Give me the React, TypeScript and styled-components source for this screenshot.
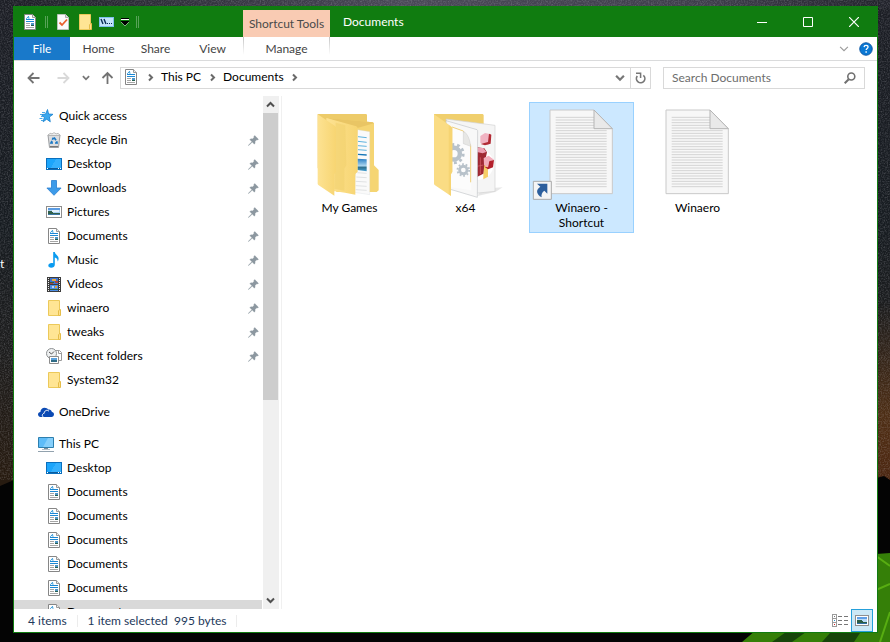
import React from "react";
import styled, { createGlobalStyle, css } from "styled-components";

const GlobalStyle = createGlobalStyle`
  *, *::before, *::after { box-sizing: border-box; }
  body { margin: 0; background: #000; }
  body, button, input {
    font-family: Lato, "Open Sans", sans-serif;
    font-size: 12px;
    line-height: 16px;
    color: #000;
  }
  button { border: 0; padding: 0; background: transparent; cursor: default; }
  a { color: inherit; text-decoration: none; cursor: default; }
  ul { margin: 0; padding: 0; list-style: none; }
  svg { display: block; flex: none; }
`;

/* ---------- desktop and window ---------- */

const Desktop = styled.div`
  position: relative;
  display: flex;
  height: 100vh;
  padding: 6px 12px 9px 13px;
  overflow: hidden;
`;

const Wallpaper = styled.svg`
  position: absolute;
  inset: 0;
  width: 100%;
  height: 100%;
`;

const DesktopLabel = styled.span`
  position: absolute;
  left: 0;
  top: 256px;
  color: #fff;
`;

const Window = styled.main`
  position: relative;
  flex: 1;
  min-width: 0;
  display: flex;
  flex-direction: column;
  border: 1px solid #107c10;
  background: #fff;
`;

const TitleBar = styled.header`
  display: flex;
  align-items: stretch;
  height: 30px;
  flex: none;
  background: #107c10;
  color: #fff;
`;

const QuickBar = styled.div`
  display: flex;
  align-items: center;
  width: 229px;
  padding-left: 8px;
  gap: 6px;
`;

const QuickButton = styled.button<{ $narrow?: boolean }>`
  display: flex;
  align-items: center;
  justify-content: center;
  width: ${({ $narrow }) => ($narrow ? 8 : 16)}px;
  height: 20px;
`;

const QuickDivider = styled.span`
  width: 3px;
  height: 12px;
  margin: 0 1px;
  border: solid #58a358;
  border-width: 0 1px;
`;

const ToolsLabel = styled.div`
  display: flex;
  align-items: center;
  justify-content: center;
  width: 87px;
  margin-top: 3px;
  background: #f9cbb3;
  color: #4a4a4a;
`;

const Title = styled.h1`
  flex: 1;
  margin: 0;
  padding: 7px 13px 0;
  font-size: 12px;
  font-weight: 400;
  line-height: 16px;
`;

const CaptionButton = styled.button`
  display: flex;
  align-items: center;
  justify-content: center;
  width: 46px;
`;

/* ---------- ribbon ---------- */

const Ribbon = styled.nav`
  display: flex;
  height: 24px;
  flex: none;
  border-bottom: 1px solid #dadbdc;
`;

const Tab = styled.button<{ $kind?: "file" | "context" }>`
  width: 57px;
  color: #444;
  ${({ $kind }) => $kind === "file" && css`
    width: 56px;
    background: #1979ca;
    color: #fff;
  `}
  ${({ $kind }) => $kind === "context" && css`
    width: 87px;
    margin-left: 2px;
    background:
      linear-gradient(#c4c4c4, #fff) left top / 1px 18px no-repeat,
      linear-gradient(#c4c4c4, #fff) right top / 1px 18px no-repeat;
  `}
`;

const RibbonEnd = styled.div`
  display: flex;
  align-items: center;
  margin-left: auto;
  padding-right: 4px;
  gap: 10px;
`;

/* ---------- address row ---------- */

const AddressRow = styled.div`
  display: flex;
  height: 35px;
  flex: none;
  padding: 6px 12px 7px;
`;

const History = styled.div`
  display: flex;
  align-items: center;
  width: 94px;
`;

const HistoryButton = styled.button<{ $before?: number }>`
  display: flex;
  align-items: center;
  justify-content: center;
  width: 14px;
  height: 22px;
  margin-left: ${({ $before = 0 }) => $before}px;
`;

const AddressBox = styled.div`
  display: flex;
  align-items: stretch;
  flex: 1;
  border: 1px solid #d9d9d9;
`;

const Crumbs = styled.div`
  display: flex;
  align-items: center;
  flex: 1;
  padding: 0 0 2px 2px;
`;

const CrumbArrow = styled.span`
  display: flex;
  justify-content: center;
  width: 22px;
`;

const BoxButton = styled.button<{ $divided?: boolean }>`
  display: flex;
  align-items: center;
  justify-content: center;
  width: 20px;
  border-left: ${({ $divided }) => ($divided ? "1px solid #d9d9d9" : "0")};
`;

const SearchBox = styled.label`
  display: flex;
  align-items: center;
  width: 202px;
  margin-left: 12px;
  padding: 0 8px;
  border: 1px solid #d9d9d9;
`;

const SearchInput = styled.input`
  flex: 1;
  min-width: 0;
  padding: 0;
  border: 0;
  outline: 0;
  background: transparent;
  &::placeholder { color: #6d6d6d; opacity: 1; }
`;

/* ---------- body ---------- */

const Body = styled.div`
  display: flex;
  flex: 1;
  min-height: 0;
`;

const NavPane = styled.nav`
  display: flex;
  width: 268px;
  flex: none;
  border-right: 1px solid #f0f0f0;
`;

const Tree = styled.div`
  display: flex;
  flex-direction: column;
  gap: 8px;
  flex: 1;
  padding: 8px 1px 0 0;
  overflow: hidden;
`;

const TreeLink = styled.a<{ $child?: boolean; $selected?: boolean }>`
  display: flex;
  align-items: center;
  gap: 5px;
  height: 24px;
  padding: 0 3px 0 ${({ $child }) => ($child ? 32 : 24)}px;
  background: ${({ $selected }) => ($selected ? "#d9d9d9" : "transparent")};
`;

const TreeText = styled.span`
  flex: 1;
`;

const ScrollBar = styled.div`
  display: flex;
  flex-direction: column;
  width: 16px;
  margin-right: 2px;
  background: #f0f0f0;
`;

const ScrollButton = styled.button`
  display: flex;
  align-items: center;
  justify-content: center;
  width: 15px;
  height: 17px;
`;

const ScrollTrack = styled.div`
  flex: 1;
`;

const ScrollThumb = styled.div`
  width: 15px;
  height: 60%;
  background: #cdcdcd;
`;

const Files = styled.div`
  display: flex;
  flex-wrap: wrap;
  align-content: flex-start;
  align-items: flex-start;
  flex: 1;
  gap: 11px;
  padding: 6px 15px;
`;

const FileButton = styled.button<{ $selected?: boolean }>`
  display: flex;
  flex-direction: column;
  align-items: center;
  width: 105px;
  padding: 1px 12px 2px;
  line-height: 15px;
  border: 1px solid ${({ $selected }) => ($selected ? "#99d1ff" : "transparent")};
  background: ${({ $selected }) => ($selected ? "#cce8ff" : "transparent")};
`;

const StatusBar = styled.footer`
  display: flex;
  align-items: center;
  height: 23px;
  flex: none;
  padding: 0 4px 0 14px;
  color: #1e395b;
`;

const StatusItem = styled.span`
  padding-right: 10px;
  margin-right: 10px;
  border-right: 1px solid #ececec;
  line-height: 12px;
  white-space: pre;
`;

const ViewButton = styled.button<{ $active?: boolean }>`
  display: flex;
  align-items: center;
  justify-content: center;
  width: 22px;
  height: 23px;
  border: ${({ $active }) => ($active ? "1px solid #26a0da" : "0")};
  background: ${({ $active }) => ($active ? "#cbe8f6" : "transparent")};
`;

const Views = styled.div`
  display: flex;
  margin-left: auto;
`;

/* ---------- small icons ---------- */

const Svg16 = ({ children, crisp }: { children: React.ReactNode; crisp?: boolean }) => (
  <svg width="16" height="16" viewBox="0 0 16 16" shapeRendering={crisp ? "crispEdges" : "auto"} aria-hidden="true">
    {children}
  </svg>
);

const DocIcon = () => (
  <Svg16>
    <path d="M2.5 .5h8l3 3v12h-11z" fill="#fff" stroke="#868686" />
    <path d="M10.5 .5v3h3" fill="#eee" stroke="#9a9a9a" />
    <path d="M4.300 4.800 6.500 2.300 7 4.800" fill="none" stroke="#1f8fd6" strokeWidth=".9" />
    <path d="M4 5.500h8M4 7.500h8" stroke="#1c88d4" />
    <path d="M4 9.500h4M4 11.500h4M4 13.500h8" stroke="#a5a5a5" />
    <path d="M9 9h3v3h-3z" fill="#4f94c4" />
    <path d="M9 11h3v1h-3z" fill="#245f4e" />
  </Svg16>
);

const FolderIcon = () => (
  <Svg16>
    <path d="M2.500 .500h11v15h-11z" fill="#ffe594" stroke="#ecc95a" />
    <path d="M12.500 15.500v-4.500l1-1.500h1v6z" fill="#ffe08a" stroke="#e5bd49" />
  </Svg16>
);

const StarIcon = () => (
  <Svg16>
    <path d="M9.500 1.500 10.600 6 15 6.300 11.400 9 12.300 13.800 8.700 11.200 5.200 13.800 6.300 9.300 3.400 6.700 7.600 6z" fill="#3aa8ee" stroke="#1580cf" strokeWidth=".8" />
    <path d="M4 4.500h3M2 6.500h2M3 8.500h2M1.500 10.500h3M3 12.500h2" stroke="#49a9e6" />
  </Svg16>
);

const BinIcon = () => (
  <Svg16>
    <path d="M2 3 3.500 15.500h9L14 3z" fill="#dcdddf" stroke="#929497" strokeWidth=".9" />
    <path d="M2 3.400 4 1.200l2 .7 2-1.200 2.200 1.100 2-.5L14 3.400z" fill="#f4f4f4" stroke="#aaa" strokeWidth=".8" />
    <path d="M4 14.500h8" stroke="#777" />
    <path d="M8 5.600 10 8.300M10.600 9.200 11 11H9M7 11H5l1-2.200M6.300 7.800 7.500 5.800" fill="none" stroke="#1977c4" strokeWidth="1.700" />
  </Svg16>
);

const DesktopIcon = () => (
  <Svg16 crisp>
    <path d="M0 2h16v12H0z" fill="#0a6fbd" />
    <path d="M1 3h14v9H1z" fill="#1ca5fb" />
    <path d="M10 3h5v9H5z" fill="#35b0fd" />
    <path d="M1 12h14v1H1z" fill="#0b5c9e" />
    <path d="M1 12h1v1H1zM12 12h1v1h-1zM14 12h1v1h-1z" fill="#fff" />
  </Svg16>
);

const DownloadIcon = () => (
  <Svg16>
    <path d="M5.500 .500h5v7.500h4.600L8 15.300.900 8h4.600z" fill="#3d9be9" stroke="#2a7fd0" strokeWidth=".8" />
  </Svg16>
);

const PictureIcon = () => (
  <Svg16 crisp>
    <path d="M0 2h16v12H0z" fill="#8e8e8e" />
    <path d="M1 3h14v10H1z" fill="#fff" />
    <path d="M2 4h12v7H2z" fill="#a9d2f5" />
    <path d="M2 4h12v2H2z" fill="#5a9be2" />
    <path d="M6 6h7v2H6z" fill="#e4f0fa" />
    <path d="M2 7h3l3 2h6v1H2z" fill="#31604b" />
    <path d="M2 10h12v1H2z" fill="#3b77a5" />
  </Svg16>
);

const MusicIcon = () => (
  <Svg16>
    <path d="M7.200 0h1.600c.4 2.800 3.800 3.400 3.800 6.600 0 1.300-.4 2.200-1 3 .2-2.400-.8-3.700-2.800-4.200v7.300c0 1.800-1.600 3-3.600 3-1.800 0-2.900-.9-2.900-2.200 0-1.700 1.700-2.700 3.400-2.600.6 0 1 .1 1.500.3z" fill="#0a9bf0" />
  </Svg16>
);

const VideoIcon = () => (
  <Svg16 crisp>
    <path d="M1 1h14v15H1z" fill="#3c3c3c" />
    <path d="M4 2h8v6H4z" fill="#3c74d2" />
    <path d="M4 9h8v6H4z" fill="#4b8ce4" />
    <path d="M6 3h4v2H6zM9 10h2v2H9z" fill="#e8a83b" />
    <path d="M4 6h3v2H4zM9 5h3v2H9z" fill="#a9453c" />
    <path d="M4 6h4v1H4zM4 13h8v1H4z" fill="#315e3a" />
    <path d="M6 10h2v2H6z" fill="#bcd5f4" />
    <path d="M2.500 2v14M13.500 2v14" stroke="#eee" strokeDasharray="1 1" />
  </Svg16>
);

const RecentIcon = () => (
  <Svg16>
    <path d="M8.500 2.500h5l2 2v8h-7z" fill="#fff" stroke="#9b9b9b" />
    <path d="M12.500 2.500v3h3" fill="none" stroke="#9b9b9b" />
    <circle cx="5.500" cy="5.500" r="5" fill="#eef0f1" stroke="#8d9092" />
    <path d="M3 4l2.500 2L8 3.500" fill="none" stroke="#555" />
    <path d="M3.500 8.500h9v7h-9z" fill="#fff" stroke="#8d8d8d" />
    <path d="M5 10h6v4H5z" fill="#5aa0dc" />
    <path d="M5 12h6v2H5z" fill="#2f6c86" />
  </Svg16>
);

const CloudIcon = () => (
  <Svg16>
    <path d="M3.500 13C1.500 13 0 12 0 10.400 0 9 1 8.100 2.400 8 2.500 5.500 4.200 3.700 6.600 3.700c1.700 0 2.800.7 3.600 1.900 1.600-.5 3.400.4 3.700 2.300 1.400.2 2.100 1.200 2.100 2.400 0 1.600-1 2.700-2.600 2.700z" fill="#0b4ab4" />
    <path d="M5.600 13.300C3.600 12.300 4 9.600 6.200 9.300 6.200 6.600 9.200 5.300 11 7.300" fill="none" stroke="#fff" strokeWidth="1" />
  </Svg16>
);

const PcIcon = () => (
  <Svg16>
    <path d="M.500 1.500h15v10H.500z" fill="#5ebcf8" stroke="#2d7fae" />
    <path d="M10 2h5v9H5z" fill="#86cffb" />
    <path d="M6 12h4v1H6z" fill="#7a8c98" />
    <path d="M4 13h8v1H4z" fill="#b4c0c9" />
    <path d="M0 15h16v1H0z" fill="#92a2ae" />
  </Svg16>
);

const PinIcon = () => (
  <svg width="11" height="11" viewBox="0 0 11 11" aria-hidden="true">
    <path d="M6.700 .600 10.400 4.200 9.600 5 8.700 4.800 7 6.600c.2 1 .1 1.900-.6 2.600L4.300 7 1 10.300.500 10.500.700 9.900 3.900 6.700 1.800 4.600C2.500 3.900 3.500 3.700 4.400 4L6.200 2.300 5.900 1.400z" fill="#8c97a0" stroke="#8c97a0" strokeWidth=".4" />
  </svg>
);

const Chevron = ({ dir, color = "#6a6a6a", size = 9, weight = 2 }: { dir: "up" | "down" | "right"; color?: string; size?: number; weight?: number }) => {
  const shapes = { up: "M1 6.500 4.500 3 8 6.500", down: "M1 2.500 4.500 6 8 2.500", right: "M3 1.500 6 4.500 3 7.500" };
  return (
    <svg width={size} height={size} viewBox="0 0 9 9" aria-hidden="true">
      <path d={shapes[dir]} fill="none" stroke={color} strokeWidth={weight} />
    </svg>
  );
};

const Arrow = ({ dir, color }: { dir: "left" | "right" | "up"; color: string }) => {
  const shapes = { left: "M12.500 7H1.500M6.500 2 1.500 7l5 5", right: "M.500 7h11M6.500 2l5 5-5 5", up: "M6.500 13V2M1.500 7l5-5 5 5" };
  return (
    <svg width="13" height="14" viewBox="0 0 13 14" aria-hidden="true">
      <path d={shapes[dir]} fill="none" stroke={color} strokeWidth="1.800" />
    </svg>
  );
};

const CheckIcon = () => (
  <Svg16>
    <path d="M2.500 .500h8l3 3v12h-11z" fill="#fafafa" stroke="#b9c4b9" />
    <path d="M10.500 .500v3h3" fill="#ddd" stroke="#aaa" />
    <path d="M4.500 8.500 7 11l5-5.500" fill="none" stroke="#e8602c" strokeWidth="1.800" />
  </Svg16>
);

const RenameIcon = () => (
  <Svg16 crisp>
    <path d="M0 3h15v10H0z" fill="#7fc0ee" />
    <path d="M1 4h13v8H1z" fill="#c4e4fb" />
    <path d="M2 5l2 5M5 5l2 5" stroke="#0b2d56" strokeWidth="1.400" shapeRendering="auto" />
    <path d="M8 9h1v1H8zM10 9h1v1h-1zM12 9h1v1h-1z" fill="#0b2d56" />
  </Svg16>
);

const MenuDownIcon = () => (
  <svg width="8" height="8" viewBox="0 0 8 8" aria-hidden="true">
    <path d="M0 1.500h8" stroke="#fff" />
    <path d="M0 .500h8M0 3.500h8" stroke="#000" />
    <path d="M0 3.500h8L4 7.800z" fill="#000" />
    <path d="M0 4 4 8l4-4" fill="none" stroke="#cfe3cf" strokeWidth=".6" />
  </svg>
);

const HelpIcon = () => (
  <svg width="14" height="14" viewBox="0 0 15 15" aria-hidden="true">
    <circle cx="7.500" cy="7.500" r="6.700" fill="#0a78d4" stroke="#0b55a3" />
    <path d="M5.400 5.500c.1-1.300 1-1.900 2.100-1.900 1.300 0 2.200.7 2.200 1.800 0 1.500-2 1.600-2 3.300" fill="none" stroke="#fff" strokeWidth="1.400" />
    <path d="M6.900 10h1.500v1.500H6.900z" fill="#fff" />
  </svg>
);

const RefreshIcon = () => (
  <svg width="11" height="12" viewBox="0 0 11 12" aria-hidden="true">
    <path d="M8.300 3.300A4.200 4.200 0 1 1 2.300 4" fill="none" stroke="#777" strokeWidth="1.700" />
    <path d="M1 1.300h4.600V6" fill="none" stroke="#777" strokeWidth="1.500" />
  </svg>
);

const SearchIcon = () => (
  <svg width="12" height="12" viewBox="0 0 12 12" aria-hidden="true">
    <circle cx="7.300" cy="4.500" r="3.500" fill="none" stroke="#707070" strokeWidth="1.600" />
    <path d="M4.700 7.200.700 11.200" stroke="#707070" strokeWidth="2" />
  </svg>
);

const DetailsIcon = () => (
  <svg width="16" height="13" viewBox="0 0 16 13" shapeRendering="crispEdges" aria-hidden="true">
    <path d="M.500 .500h4v12h-4zM0 4.500h5M0 8.500h5" fill="#fff" stroke="#9a9a9a" />
    <path d="M6 2.500h4M12 2.500h4M6 6.500h4M12 6.500h4M6 10.500h4M12 10.500h4" stroke="#777" />
    <path d="M2 2h1v1H2z" fill="#777" />
    <path d="M2 6h1v1H2z" fill="#259ad8" />
    <path d="M2 10h1v1H2z" fill="#d22" />
  </svg>
);

const Thumbnail = () => (
  <svg width="14" height="11" viewBox="0 0 14 11" shapeRendering="crispEdges" aria-hidden="true">
    <path d="M.500 .500h13v10H.500z" fill="#fff" stroke="#8e8e8e" />
    <path d="M2 2h10v7H2z" fill="#b9daf7" />
    <path d="M2 2h10v2H2z" fill="#5f9fe6" />
    <path d="M2 5h4l2 2h4v1H2z" fill="#2c5e46" />
    <path d="M2 8h10v1H2z" fill="#2f6ea5" />
  </svg>
);

/* ---------- large icons ---------- */

const LargeSvg = styled.svg`
  width: 96px;
  height: 96px;
  overflow: visible;
`;

const GamesFolder = () => (
  <LargeSvg viewBox="7 24 288 288" aria-hidden="true">
    <defs>
      <linearGradient id="flap" x1="0" x2="1" y1="0" y2="0">
        <stop offset="0" stopColor="#fde292" />
        <stop offset="1" stopColor="#f7d572" />
      </linearGradient>
      <linearGradient id="sky" x1="0" x2="0" y1="0" y2="1">
        <stop offset="0" stopColor="#277dc4" />
        <stop offset=".55" stopColor="#a9d4ee" />
        <stop offset=".7" stopColor="#2f7190" />
        <stop offset="1" stopColor="#46a2d6" />
      </linearGradient>
    </defs>
    <path d="M54 54h146l2 3v160H54z" fill="#edcb69" />
    <path d="M82 66l137 13 4 3v126l14 14v61l-6 5H110z" fill="#f5d573" />
    <path d="M82 66l137 13 4 3-50 14z" fill="#e9c564" />
    <path d="M173 101l37 6v189l-46-7z" fill="#fafafa" stroke="#d5dadd" />
    <path d="M175 122l26 3M175 136l26 3M175 149l26 2M175 161l26 2" stroke="#5fb3df" strokeWidth="3" />
    <path d="M175 175l26 2" stroke="#1777b8" strokeWidth="4" />
    <path d="M173 188l28 2v36l-28-4z" fill="url(#sky)" />
    <path d="M173 230l28 2M170 243l31 2M168 256l33 2M168 269l33 2M168 281l33 2" stroke="#d1d5d7" strokeWidth="2" />
    <path d="M80 66l90 25 4 4v132l-7 7v62l-31-6-56-8z" fill="url(#flap)" />
    <path d="M108 80l29 8 3 120-6 10v66l-30-6z" fill="#f0cf6b" opacity=".55" />
    <path d="M54 55l52 35 3 4v133l-5 8v64l-48-32-2-3z" fill="url(#flap)" />
  </LargeSvg>
);

const Gear = ({ x, y, r }: { x: number; y: number; r: number }) => (
  <g stroke="#b8c2ca" fill="none">
    <circle cx={x} cy={y} r={r * 1.25} strokeWidth={r * 0.4} pathLength="20" strokeDasharray="1 1" />
    <circle cx={x} cy={y} r={r * 0.8} strokeWidth={r * 0.6} />
  </g>
);

const GearFolder = () => (
  <LargeSvg viewBox="354 24 288 288" aria-hidden="true">
    <defs>
      <clipPath id="gearPage"><path d="M456 93l38 11 20 44v135l-64 2z" /></clipPath>
    </defs>
    <path d="M545 278l63-4-22 14-54 12z" fill="#ddd" opacity=".7" />
    <path d="M402 54h146l3 3v160H402z" fill="#f0cf6d" />
    <path d="M438 69l147 19v198l-80 8z" fill="#f5f5f5" stroke="#d2d2d2" strokeWidth="2" />
    <circle cx="535" cy="205" r="46" fill="#fff" />
    <path d="M550 203l14-9v48l-14 8z" fill="#f6cf68" />
    <path d="M541 120l14-9 18 4-4 10-4 22-24-6z" fill="#f0b3c2" />
    <path d="M567 113l7 3-2 27-17 5-13-4 22-6z" fill="#b22b35" />
    <path d="M531 154l22 3 8 12-7 30-4 34-19 10z" fill="#9f2832" />
    <path d="M530 155l20 1 9 12-11 4-17-4z" fill="#eda0b2" />
    <path d="M531 211l19-4M541 184v50" stroke="#d9636e" strokeWidth="2" />
    <path d="M551 186l15-7 16 12-14 4-4 20-12-9z" fill="#f3adbb" />
    <path d="M568 195l14-3-3 22-15 6-11-8 11 2z" fill="#b3202c" />
    <path d="M438 74l93 27 2 3-1 200-84-25z" fill="#f8f8f8" stroke="#c2c6c8" strokeWidth="2" />
    <path d="M456 93l38 11 20 44v135l-64-10z" fill="#fcfcfc" />
    <path d="M456 93l34 12 22 44v110" fill="none" stroke="#efcf7c" strokeWidth="3" />
    <path d="M490 106v37l22 8c-2-17-8-39-22-45z" fill="#e7e7e5" stroke="#bbb" />
    <g clipPath="url(#gearPage)"><Gear x={462} y={173} r={22} /></g>
    <Gear x={490} y={222} r={14} />
    <path d="M402 55l51 36 4 5v132l-4 7v65l-49-33-2-3z" fill="#fadc84" />
    <path d="M446 87l7 5 4 5v130l-4 7v65l-7-4z" fill="#f3cf67" opacity=".6" />
  </LargeSvg>
);

const TextPage = ({ x }: { x: number }) => (
  <g>
    <path d={`M${x} 42h132l55 56v195h-187z`} fill="#f7f7f7" stroke="#c9c9c9" strokeWidth="3" />
    {Array.from({ length: 27 }, (_, i) => 64 + i * 8).map((y) => (
      <path key={y} d={`M${x + 17} ${y}h${y < 98 ? 115 : 153}`} stroke="#d3d3d3" strokeWidth="3" />
    ))}
    <path d={`M${x + 132} 42v56h55z`} fill="#e9e9e9" stroke="#b5b5b5" strokeWidth="3" />
  </g>
);

const TextFile = ({ shortcut }: { shortcut?: boolean }) => (
  <LargeSvg viewBox="58 24 288 288" aria-hidden="true">
    <TextPage x={106} />
    {shortcut && (
      <g>
        <path d="M56 256h54v54H56z" fill="#f5f5f5" stroke="#aaa" strokeWidth="3" />
        <path d="M67 263h31v30l-9-9c-7 5-10 12-8 20-17-10-18-23-4-32z" fill="#2d5f9d" />
      </g>
    )}
  </LargeSvg>
);

/* ---------- wallpaper ---------- */

const Background = () => (
  <Wallpaper viewBox="0 0 890 642" preserveAspectRatio="none" aria-hidden="true">
    <defs>
      <linearGradient id="night" x1="0" x2="0" y1="0" y2="1">
        <stop offset="0" stopColor="#1c1e25" />
        <stop offset=".35" stopColor="#171c21" />
        <stop offset=".55" stopColor="#1d1d1d" />
        <stop offset=".74" stopColor="#271b10" />
      </linearGradient>
      <linearGradient id="dusk" x1="0" x2="0" y1="0" y2="1">
        <stop offset="0" stopColor="#6a3a14" stopOpacity="0" />
        <stop offset=".6" stopColor="#6a3a14" stopOpacity=".6" />
        <stop offset="1" stopColor="#4c2410" stopOpacity=".9" />
      </linearGradient>
      <linearGradient id="haze" x1="0" x2="1" y1="0" y2="0">
        <stop offset="0" stopColor="#555364" stopOpacity="0" />
        <stop offset=".45" stopColor="#555364" stopOpacity=".8" />
        <stop offset=".8" stopColor="#555364" stopOpacity=".6" />
        <stop offset="1" stopColor="#555364" stopOpacity=".1" />
      </linearGradient>
      <filter id="stars" x="0" y="0" width="100%" height="100%">
        <feTurbulence type="fractalNoise" baseFrequency=".7" numOctaves="2" seed="4" />
        <feColorMatrix values="0 0 0 0 .6  0 0 0 0 .6  0 0 0 0 .65  .5 0 0 0 -.2" />
      </filter>
    </defs>
    <path d="M0 0h890v642H0z" fill="url(#night)" />
    <path d="M0 0h890v8H0z" fill="url(#haze)" />
    <path d="M870 300h20v190h-20z" fill="url(#dusk)" />
    <path d="M0 0h890v480H0z" filter="url(#stars)" />
    <path d="M0 486l14-6v162H0zM0 632h760v10H0zM876 478l8-2 6 4v80h-14z" fill="#040404" />
    <path d="M742 642l14-12h120v-76l14-1v89z" fill="#357f08" />
    <path d="M772 642l14-10h20l-14 10zM822 642l8-9h30l-6 9z" fill="#17450a" />
    <path d="M876 556l14 10M876 590l14-6M880 642l10-30" stroke="#58ad12" strokeWidth="2" />
  </Wallpaper>
);

/* ---------- data ---------- */

type Entry = { name: string; icon: React.ReactNode; pinned?: boolean; selected?: boolean };

const groups: { head: Entry; items: Entry[] }[] = [
  {
    head: { name: "Quick access", icon: <StarIcon /> },
    items: [
      { name: "Recycle Bin", icon: <BinIcon />, pinned: true },
      { name: "Desktop", icon: <DesktopIcon />, pinned: true },
      { name: "Downloads", icon: <DownloadIcon />, pinned: true },
      { name: "Pictures", icon: <PictureIcon />, pinned: true },
      { name: "Documents", icon: <DocIcon />, pinned: true },
      { name: "Music", icon: <MusicIcon />, pinned: true },
      { name: "Videos", icon: <VideoIcon />, pinned: true },
      { name: "winaero", icon: <FolderIcon />, pinned: true },
      { name: "tweaks", icon: <FolderIcon />, pinned: true },
      { name: "Recent folders", icon: <RecentIcon />, pinned: true },
      { name: "System32", icon: <FolderIcon /> },
    ],
  },
  { head: { name: "OneDrive", icon: <CloudIcon /> }, items: [] },
  {
    head: { name: "This PC", icon: <PcIcon /> },
    items: [
      { name: "Desktop", icon: <DesktopIcon /> },
      ...Array.from({ length: 6 }, (_, i) => ({ name: "Documents", icon: <DocIcon />, selected: i === 5 })),
    ],
  },
];

const files = [
  { name: "My Games", icon: <GamesFolder /> },
  { name: "x64", icon: <GearFolder /> },
  { name: "Winaero - Shortcut", icon: <TextFile shortcut />, selected: true },
  { name: "Winaero", icon: <TextFile /> },
];

const TreeRow = ({ entry, child }: { entry: Entry; child?: boolean }) => (
  <li>
    <TreeLink href="#" $child={child} $selected={entry.selected}>
      {entry.icon}
      <TreeText>{entry.name}</TreeText>
      {entry.pinned && <PinIcon />}
    </TreeLink>
  </li>
);

export default function App() {
  return (
    <Desktop>
      <GlobalStyle />
      <Background />
      <DesktopLabel>t</DesktopLabel>
      <Window>
        <TitleBar>
          <QuickBar>
            <QuickButton aria-label="Window menu"><DocIcon /></QuickButton>
            <QuickDivider />
            <QuickButton aria-label="Properties"><CheckIcon /></QuickButton>
            <QuickButton aria-label="New folder"><FolderIcon /></QuickButton>
            <QuickButton aria-label="Rename"><RenameIcon /></QuickButton>
            <QuickButton $narrow aria-label="Customize toolbar"><MenuDownIcon /></QuickButton>
            <QuickDivider />
          </QuickBar>
          <ToolsLabel>Shortcut Tools</ToolsLabel>
          <Title>Documents</Title>
          <CaptionButton aria-label="Minimize">
            <svg width="10" height="10" viewBox="0 0 10 10"><path d="M0 5.500h10" stroke="#fff" /></svg>
          </CaptionButton>
          <CaptionButton aria-label="Maximize">
            <svg width="10" height="10" viewBox="0 0 10 10"><path d="M.500 .500h9v9h-9z" fill="none" stroke="#fff" /></svg>
          </CaptionButton>
          <CaptionButton aria-label="Close">
            <svg width="10" height="10" viewBox="0 0 10 10"><path d="M0 0l10 10M10 0 0 10" stroke="#fff" strokeWidth="1.200" /></svg>
          </CaptionButton>
        </TitleBar>

        <Ribbon aria-label="Ribbon">
          <Tab $kind="file">File</Tab>
          <Tab>Home</Tab>
          <Tab>Share</Tab>
          <Tab>View</Tab>
          <Tab $kind="context">Manage</Tab>
          <RibbonEnd>
            <button aria-label="Expand ribbon"><Chevron dir="down" color="#9a9a9a" weight={1} size={10} /></button>
            <button aria-label="Help"><HelpIcon /></button>
          </RibbonEnd>
        </Ribbon>

        <AddressRow>
          <History>
            <HistoryButton aria-label="Back"><Arrow dir="left" color="#737373" /></HistoryButton>
            <HistoryButton $before={16} aria-label="Forward"><Arrow dir="right" color="#d9d9d9" /></HistoryButton>
            <HistoryButton $before={9} aria-label="Recent locations"><Chevron dir="down" color="#777" size={8} /></HistoryButton>
            <HistoryButton $before={7} aria-label="Up"><Arrow dir="up" color="#737373" /></HistoryButton>
          </History>
          <AddressBox>
            <Crumbs>
              <DocIcon />
              <CrumbArrow><Chevron dir="right" /></CrumbArrow>
              <a href="#">This PC</a>
              <CrumbArrow><Chevron dir="right" /></CrumbArrow>
              <a href="#">Documents</a>
              <CrumbArrow><Chevron dir="right" /></CrumbArrow>
            </Crumbs>
            <BoxButton aria-label="Previous locations"><Chevron dir="down" color="#777" size={10} /></BoxButton>
            <BoxButton $divided aria-label="Refresh"><RefreshIcon /></BoxButton>
          </AddressBox>
          <SearchBox>
            <SearchInput type="text" placeholder="Search Documents" aria-label="Search Documents" />
            <SearchIcon />
          </SearchBox>
        </AddressRow>

        <Body>
          <NavPane aria-label="Folders">
            <Tree>
              {groups.map((group) => (
                <ul key={group.head.name}>
                  <TreeRow entry={group.head} />
                  {group.items.map((entry, i) => <TreeRow key={i} entry={entry} child />)}
                </ul>
              ))}
            </Tree>
            <ScrollBar>
              <ScrollButton aria-label="Scroll up"><Chevron dir="up" color="#505050" /></ScrollButton>
              <ScrollTrack><ScrollThumb /></ScrollTrack>
              <ScrollButton aria-label="Scroll down"><Chevron dir="down" color="#505050" /></ScrollButton>
            </ScrollBar>
          </NavPane>
          <Files>
            {files.map((file) => (
              <FileButton key={file.name} $selected={file.selected}>
                {file.icon}
                {file.name}
              </FileButton>
            ))}
          </Files>
        </Body>

        <StatusBar>
          <StatusItem>4 items</StatusItem>
          <StatusItem>{"1 item selected  995 bytes"}</StatusItem>
          <Views>
            <ViewButton aria-label="Details view"><DetailsIcon /></ViewButton>
            <ViewButton $active aria-label="Large icons view"><Thumbnail /></ViewButton>
          </Views>
        </StatusBar>
      </Window>
    </Desktop>
  );
}
